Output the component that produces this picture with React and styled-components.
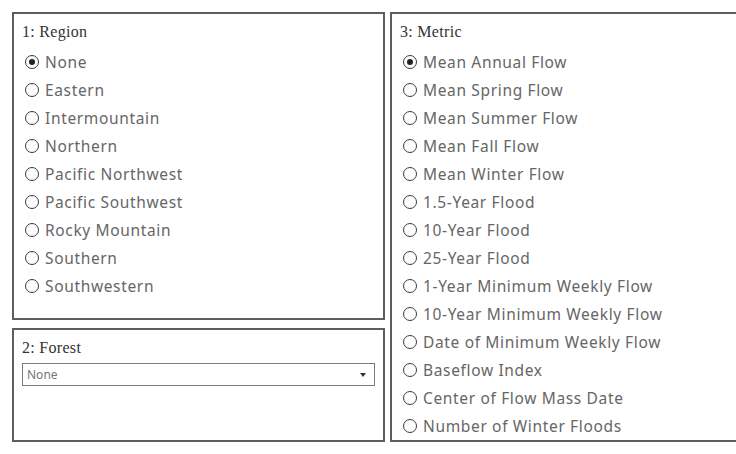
import React, { useState } from "react";
import styled, { createGlobalStyle } from "styled-components";

const GlobalStyle = createGlobalStyle`
  html, body {
    margin: 0;
    padding: 0;
    background: #ffffff;
    overflow: hidden;
  }
`;

const Page = styled.div`
  display: grid;
  grid-template-columns: 373px 360px;
  column-gap: 5px;
  padding: 12px 0 0 12px;
  width: 760px;
`;

const Column = styled.div`
  display: flex;
  flex-direction: column;
  gap: 8px;
`;

const Panel = styled.div`
  box-sizing: border-box;
  height: ${(p) => p.$height}px;
  border: 2px solid #5e5e5e;
  padding: 8px 8px 0 8px;
  overflow: hidden;
`;

const Title = styled.div`
  font-family: "Liberation Serif", serif;
  font-size: 16px;
  letter-spacing: 0.3px;
  color: #333;
  line-height: 20px;
`;

const List = styled.div`
  display: flex;
  flex-direction: column;
  padding-top: 6px;
`;

const Option = styled.label`
  display: flex;
  align-items: center;
  height: 28px;
  font-family: "Noto Sans", sans-serif;
  font-size: 15.5px;
  letter-spacing: 0.65px;
  color: #666;
  cursor: pointer;
`;

const Circle = styled.span`
  box-sizing: border-box;
  flex: none;
  width: 14px;
  height: 14px;
  border: 1px solid #3a3a3a;
  border-radius: 50%;
  margin: 0 6px 0 3px;
  display: flex;
  align-items: center;
  justify-content: center;

  &::after {
    content: "";
    width: 6px;
    height: 6px;
    border-radius: 50%;
    background: #222;
    display: ${(p) => (p.$on ? "block" : "none")};
  }
`;

const Select = styled.div`
  box-sizing: border-box;
  height: 23px;
  margin-top: 5px;
  border: 1px solid #7a7a7a;
  display: flex;
  align-items: center;
  justify-content: space-between;
  padding: 0 8px 0 4px;
  font-family: "Noto Sans", sans-serif;
  font-size: 12px;
  color: #777;
`;

const Arrow = styled.span`
  width: 0;
  height: 0;
  border-left: 3.5px solid transparent;
  border-right: 3.5px solid transparent;
  border-top: 4px solid #333;
`;

const regions = [
  "None",
  "Eastern",
  "Intermountain",
  "Northern",
  "Pacific Northwest",
  "Pacific Southwest",
  "Rocky Mountain",
  "Southern",
  "Southwestern",
];

const metrics = [
  "Mean Annual Flow",
  "Mean Spring Flow",
  "Mean Summer Flow",
  "Mean Fall Flow",
  "Mean Winter Flow",
  "1.5-Year Flood",
  "10-Year Flood",
  "25-Year Flood",
  "1-Year Minimum Weekly Flow",
  "10-Year Minimum Weekly Flow",
  "Date of Minimum Weekly Flow",
  "Baseflow Index",
  "Center of Flow Mass Date",
  "Number of Winter Floods",
];

const RadioList = ({ items, value, onChange }) => (
  <List>
    {items.map((item) => (
      <Option key={item} onClick={() => onChange(item)}>
        <Circle $on={item === value} />
        {item}
      </Option>
    ))}
  </List>
);

const App = () => {
  const [region, setRegion] = useState("None");
  const [metric, setMetric] = useState("Mean Annual Flow");

  return (
    <>
      <GlobalStyle />
      <Page>
        <Column>
          <Panel $height={308}>
            <Title>1: Region</Title>
            <RadioList items={regions} value={region} onChange={setRegion} />
          </Panel>
          <Panel $height={114}>
            <Title>2: Forest</Title>
            <Select>
              None
              <Arrow />
            </Select>
          </Panel>
        </Column>
        <Panel $height={430}>
          <Title>3: Metric</Title>
          <RadioList items={metrics} value={metric} onChange={setMetric} />
        </Panel>
      </Page>
    </>
  );
};

export default App;
